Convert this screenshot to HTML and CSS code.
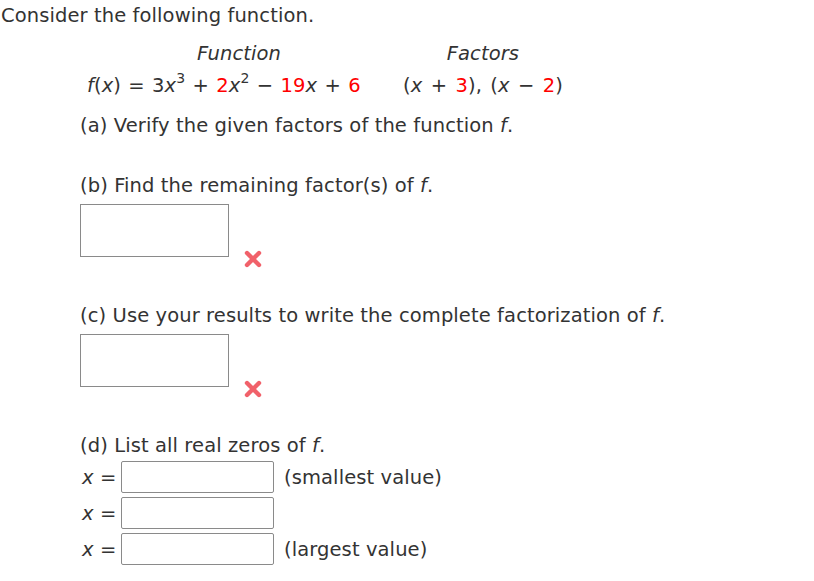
FILE: index.html
```html
<!DOCTYPE html>
<html lang="en">
<head>
<meta charset="UTF-8">
<title>Factor the function</title>
<link rel="stylesheet" href="styles.css">
</head>
<body>
<div id="question">
  <p class="intro">Consider the following function.</p>

  <div class="fn-table">
    <div class="fn-col fn-left">
      <div class="col-head head-fn">Function</div>
      <div class="col-body"><i>f</i>(<i>x</i>) = 3<i>x</i><sup>3</sup> + <span class="red">2</span><i>x</i><sup>2</sup> &minus; <span class="red">19</span><i>x</i> + <span class="red">6</span></div>
    </div>
    <div class="fn-col fn-right">
      <div class="col-head">Factors</div>
      <div class="col-body">(<i>x</i> + <span class="red">3</span>), (<i>x</i> &minus; <span class="red">2</span>)</div>
    </div>
  </div>

  <div class="part">
    <p class="part-label part-a">(a) Verify the given factors of the function <i>f</i>.</p>
  </div>

  <div class="part">
    <p class="part-label">(b) Find the remaining factor(s) of <i>f</i>.</p>
    <div class="answer-row">
      <div class="big-box"></div>
      <span class="wrong">
        <svg width="20" height="20" viewBox="0 0 20 20"><path d="M4 4 L16 16 M16 4 L4 16" stroke="#f0505a" stroke-width="4.4" stroke-linecap="round" opacity="0.9"/></svg>
      </span>
    </div>
  </div>

  <div class="part part-c">
    <p class="part-label">(c) Use your results to write the complete factorization of <i>f</i>.</p>
    <div class="answer-row">
      <div class="big-box"></div>
      <span class="wrong">
        <svg width="20" height="20" viewBox="0 0 20 20"><path d="M4 4 L16 16 M16 4 L4 16" stroke="#f0505a" stroke-width="4.4" stroke-linecap="round" opacity="0.9"/></svg>
      </span>
    </div>
  </div>

  <div class="part part-d">
    <p class="part-label">(d) List all real zeros of <i>f</i>.</p>
    <div class="zero-row"><span class="xeq"><i>x</i> =</span><div class="small-box"></div><span class="note">(smallest value)</span></div>
    <div class="zero-row"><span class="xeq"><i>x</i> =</span><div class="small-box"></div></div>
    <div class="zero-row"><span class="xeq"><i>x</i> =</span><div class="small-box"></div><span class="note">(largest value)</span></div>
  </div>
</div>
</body>
</html>
```

FILE: styles.css
```css
body {
  font-family: "DejaVu Sans", Verdana, sans-serif;
  font-size: 19.5px;
  letter-spacing: 0.1px;
  color: #333;
  background-color: #fff;
  margin: 0;
  padding: 0;
}

#question {
  padding: 4px 0 0 1px;
}

p {
  margin: 0;
}

.intro {
  line-height: 24px;
}

.red {
  color: #ff0000;
}

sup {
  font-size: 14px;
  line-height: 0;
  vertical-align: 9px;
}

/* function / factors table */
.fn-table {
  display: flex;
  margin: 14px 0 0 86px;
}

.fn-col {
  display: flex;
  flex-direction: column;
}

.fn-left {
  width: 316px;
}

.fn-left .col-body {
  word-spacing: 1px;
}

.fn-right {
  align-items: center;
}

.fn-right .col-body {
  word-spacing: 2px;
}

.col-head {
  font-style: italic;
  line-height: 24px;
}

.head-fn {
  padding-left: 110px;
}

.col-body {
  line-height: 24px;
  margin-top: 8px;
}

/* parts */
.part {
  padding-left: 79px;
}

.part-label {
  line-height: 24px;
}

.part-a {
  margin-top: 16px;
}

.part + .part {
  margin-top: 36px;
}

.part-c {
  margin-top: 47px !important;
}

.answer-row {
  display: flex;
  align-items: flex-end;
  margin-top: 6px;
}

.big-box {
  width: 147px;
  height: 51px;
  border: 1px solid #8a8a8a;
}

.wrong {
  display: block;
  margin: 0 0 -12px 14px;
  height: 20px;
}

.part-d {
  margin-top: 47px !important;
}

.zero-row {
  display: flex;
  align-items: center;
  margin-top: 4px;
}

.part-label + .zero-row {
  margin-top: 3px;
}

.xeq {
  width: 41px;
  padding-left: 2px;
  box-sizing: border-box;
}

.small-box {
  width: 151px;
  height: 30px;
  border: 1px solid #8a8a8a;
  border-radius: 2px;
}

.note {
  margin-left: 10px;
}
```
